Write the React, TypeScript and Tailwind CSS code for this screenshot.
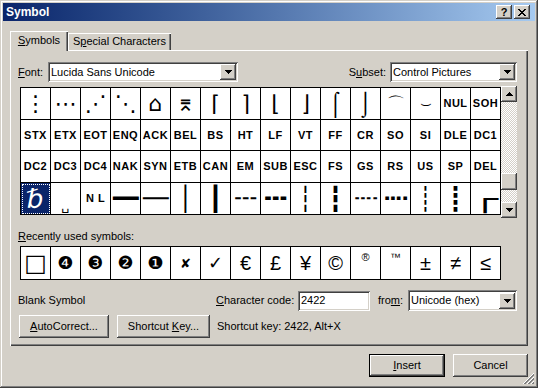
import React from "react";

const raised =
  "bg-[#d4d0c8] shadow-[inset_-1px_-1px_#404040,inset_1px_1px_#ffffff,inset_-2px_-2px_#808080,inset_2px_2px_#d4d0c8]";
const sunken =
  "bg-white shadow-[inset_1px_1px_#808080,inset_-1px_-1px_#ffffff,inset_2px_2px_#404040,inset_-2px_-2px_#d4d0c8]";

const glyph = "font-['DejaVu_Sans',sans-serif]";
const mono = "font-['DejaVu_Sans_Mono',monospace]";
const label = "font-bold text-[11px] tracking-[0.5px]";

type Cell = { c: string; cls: string; sel?: boolean };

const g = (c: string, cls = "text-[22px]"): Cell => ({ c, cls: `${glyph} ${cls}` });
const t = (c: string): Cell => ({ c, cls: label });
const bx = (c: string, cls = ""): Cell => ({ c, cls: `${mono} text-[22px] ${cls}` });

const rows: Cell[][] = [
  [
    g("⋮"), g("⋯"), g("⋰"), g("⋱"), g("⌂"), g("⌆"), g("⌈"), g("⌉"),
    g("⌊"), g("⌋"), g("⌠", "text-[23px] font-light"), g("⌡", "text-[23px] font-light"), g("⌒", "text-[18px]"), g("⌣", "text-[18px]"), t("NUL"), t("SOH"),
  ],
  ["STX", "ETX", "EOT", "ENQ", "ACK", "BEL", "BS", "HT", "LF", "VT", "FF", "CR", "SO", "SI", "DLE", "DC1"].map(t),
  ["DC2", "DC3", "DC4", "NAK", "SYN", "ETB", "CAN", "EM", "SUB", "ESC", "FS", "GS", "RS", "US", "SP", "DEL"].map(t),
  [
    { c: "␢", cls: `${glyph} text-[26px] text-white italic`, sel: true },
    g("␣", "text-[13px] pt-[14px]"),
    t("N L"),
    bx("━", "inline-block scale-x-[1.9]"),
    bx("─", "inline-block scale-x-[1.9]"),
    bx("│", "text-[24px]"),
    bx("┃", "text-[24px]"),
    bx("┄", "inline-block scale-x-[1.8]"),
    bx("┅", "inline-block scale-x-[1.8]"),
    bx("┆", "text-[24px]"),
    bx("┇", "text-[24px]"),
    bx("┈", "inline-block scale-x-[1.8]"),
    bx("┉", "inline-block scale-x-[1.8]"),
    bx("┊", "text-[24px]"),
    bx("┋", "text-[24px]"),
    bx("┌", "inline-block scale-x-[1.8] text-[24px]"),
  ],
];

const rowH = ["h-[32px]", "h-[31px]", "h-[32px]", "h-[32px]"];

const recent: Cell[] = [
  g("□", "text-[24px]"),
  g("❹", "text-[18px]"),
  g("❸", "text-[18px]"),
  g("❷", "text-[18px]"),
  g("❶", "text-[18px]"),
  g("✘", "text-[13px]"),
  g("✓", "text-[18px]"),
  { c: "€", cls: "text-[20px]" },
  { c: "£", cls: "text-[20px]" },
  { c: "¥", cls: "text-[20px]" },
  { c: "©", cls: "text-[20px]" },
  { c: "®", cls: "text-[11px] pb-[12px]" },
  { c: "™", cls: "text-[11px] pb-[12px]" },
  { c: "±", cls: "text-[20px]" },
  { c: "≠", cls: "text-[20px]" },
  { c: "≤", cls: "text-[20px]" },
];

const Arrow = ({ up }: { up?: boolean }) => (
  <svg width="7" height="4" viewBox="0 0 7 4" className={up ? "rotate-180" : ""}>
    <path d="M0 0h7v1H0zM1 1h5v1H1zM2 2h3v1H2zM3 3h1v1H3z" fill="#000" />
  </svg>
);

const Combo = ({ value, w }: { value: string; w: string }) => (
  <div className={`${sunken} ${w} h-[20px] flex items-center`}>
    <span className="flex-1 pl-[3px] leading-none">{value}</span>
    <div className={`${raised} w-[16px] h-[16px] mr-[2px] flex items-center justify-center`}>
      <Arrow />
    </div>
  </div>
);

const Btn = ({ children, w, def }: { children: React.ReactNode; w: string; def?: boolean }) => (
  <div className={`${w} h-[23px] ${def ? "border border-black" : ""}`}>
    <div className={`${raised} w-full h-full flex items-center justify-center`}>{children}</div>
  </div>
);

const U = ({ children }: { children: string }) => (
  <span className="underline underline-offset-[1px]">{children}</span>
);

export default function App() {
  return (
    <div className="relative w-[538px] h-[388px] bg-[#d4d0c8] p-[3px] flex flex-col font-['Liberation_Sans',Arial,sans-serif] text-[11px] text-black shadow-[inset_-1px_-1px_#404040,inset_1px_1px_#d4d0c8,inset_-2px_-2px_#808080,inset_2px_2px_#ffffff]">
      {/* title bar */}
      <div className="h-[18px] flex items-center bg-gradient-to-r from-[#0a246a] to-[#a6caf0]">
        <span className="ml-[3px] font-bold text-white text-[12px]">Symbol</span>
        <div className="ml-auto mr-[5px] flex gap-[2px]">
          <div className={`${raised} w-[16px] h-[14px] flex items-center justify-center font-bold text-[11px] leading-none`}>?</div>
          <div className={`${raised} w-[16px] h-[14px] flex items-center justify-center`}>
            <svg width="8" height="7" viewBox="0 0 8 7">
              <path d="M0 0h2v1H0zM6 0h2v1H6zM1 1h2v1H1zM5 1h2v1H5zM2 2h4v1H2zM3 3h2v1H3zM2 4h4v1H2zM1 5h2v1H1zM5 5h2v1H5zM0 6h2v1H0zM6 6h2v1H6z" fill="#000" />
            </svg>
          </div>
        </div>
      </div>

      <div className="flex-1 px-[7px] pt-[10px] flex flex-col">
        {/* tabs */}
        <div className="h-[19px] flex items-end">
          <div className="relative z-10 w-[58px] h-[20px] -mb-[1px] bg-[#d4d0c8] flex items-center justify-center pb-[2px] shadow-[inset_1px_1px_#ffffff,inset_-1px_0_#404040,inset_-2px_0_#808080]">
            <span>
              <U>S</U>ymbols
            </span>
          </div>
          <div className="w-[103px] h-[17px] flex items-center justify-center shadow-[inset_1px_1px_#ffffff,inset_-1px_0_#404040,inset_-2px_0_#808080]">
            <span>
              S<U>p</U>ecial Characters
            </span>
          </div>
        </div>

        {/* panel */}
        <div className="h-[296px] flex flex-col shadow-[inset_1px_1px_#ffffff,inset_-1px_-1px_#404040,inset_-2px_-2px_#808080]">
          <div className="mt-[12px] h-[20px] flex items-center">
            <span className="ml-[8px] w-[30px]">
              <U>F</U>ont:
            </span>
            <Combo value="Lucida Sans Unicode" w="w-[190px]" />
            <span className="ml-auto mr-[4px]">
              S<U>u</U>bset:
            </span>
            <Combo value="Control Pictures" w="w-[127px]" />
            <div className="w-[11px]" />
          </div>

          {/* symbol grid */}
          <div className="mt-[4px] ml-[10px] flex items-start">
            <div className="mt-[1px] w-[481px] border-t border-l border-black bg-white">
              {rows.map((row, ri) => (
                <div key={ri} className="flex">
                  {row.map((cell, ci) => (
                    <div
                      key={ci}
                      className={`w-[30px] ${rowH[ri]} border-r border-b border-black flex items-center justify-center overflow-hidden leading-none ${
                        cell.sel ? "bg-[#0a246a] outline-1 outline-dotted outline-white -outline-offset-2" : ""
                      }`}
                    >
                      <span className={cell.cls}>{cell.c}</span>
                    </div>
                  ))}
                </div>
              ))}
            </div>
            <div className="w-[16px] h-[132px] flex flex-col">
              <div className={`${raised} h-[16px] flex items-center justify-center`}>
                <Arrow up />
              </div>
              <div className="h-[71px] bg-[repeating-conic-gradient(#ffffff_0_25%,#d4d0c8_0_50%)] bg-[length:2px_2px]" />
              <div className={`${raised} h-[17px]`} />
              <div className="flex-1 bg-[repeating-conic-gradient(#ffffff_0_25%,#d4d0c8_0_50%)] bg-[length:2px_2px]" />
              <div className={`${raised} h-[16px] flex items-center justify-center`}>
                <Arrow />
              </div>
            </div>
          </div>

          <div className="mt-[12px] ml-[8px] h-[13px] leading-[13px]">
            <U>R</U>ecently used symbols:
          </div>
          <div className="mt-[3px] ml-[10px] w-[481px] flex border-t border-l border-black bg-white">
            {recent.map((cell, i) => (
              <div key={i} className="w-[30px] h-[33px] border-r border-b border-black flex items-center justify-center leading-none">
                <span className={cell.cls}>{cell.c}</span>
              </div>
            ))}
          </div>

          <div className="mt-[10px] h-[21px] flex items-center">
            <span className="ml-[8px] w-[198px]">Blank Symbol</span>
            <span className="w-[82px]">
              <U>C</U>haracter code:
            </span>
            <div className={`${sunken} w-[72px] h-[20px] flex items-center pl-[3px]`}>2422</div>
            <span className="ml-[8px] w-[30px]">
              fro<U>m</U>:
            </span>
            <Combo value="Unicode (hex)" w="w-[109px] h-[21px]" />
          </div>

          <div className="mt-[4px] h-[23px] flex items-center">
            <div className="ml-[9px]">
              <Btn w="w-[90px]">
                <span>
                  <U>A</U>utoCorrect...
                </span>
              </Btn>
            </div>
            <div className="ml-[8px]">
              <Btn w="w-[93px]">
                <span>
                  Shortcut <U>K</U>ey...
                </span>
              </Btn>
            </div>
            <span className="ml-[7px]">Shortcut key: 2422, Alt+X</span>
          </div>
        </div>

        <div className="mt-[8px] flex justify-end gap-[8px]">
          <Btn w="w-[76px]" def>
            <span>
              <U>I</U>nsert
            </span>
          </Btn>
          <Btn w="w-[75px]">
            <span>Cancel</span>
          </Btn>
        </div>
      </div>

      {/* size grip */}
      <svg width="12" height="12" viewBox="0 0 12 12" className="absolute right-[3px] bottom-[3px]">
        <path d="M11 0L0 11M11 4L4 11M11 8L8 11" stroke="#ffffff" strokeWidth="1" />
        <path d="M11 1L1 11M11 2L2 11M11 5L5 11M11 6L6 11M11 9L9 11M11 10L10 11" stroke="#808080" strokeWidth="1" />
      </svg>
    </div>
  );
}
